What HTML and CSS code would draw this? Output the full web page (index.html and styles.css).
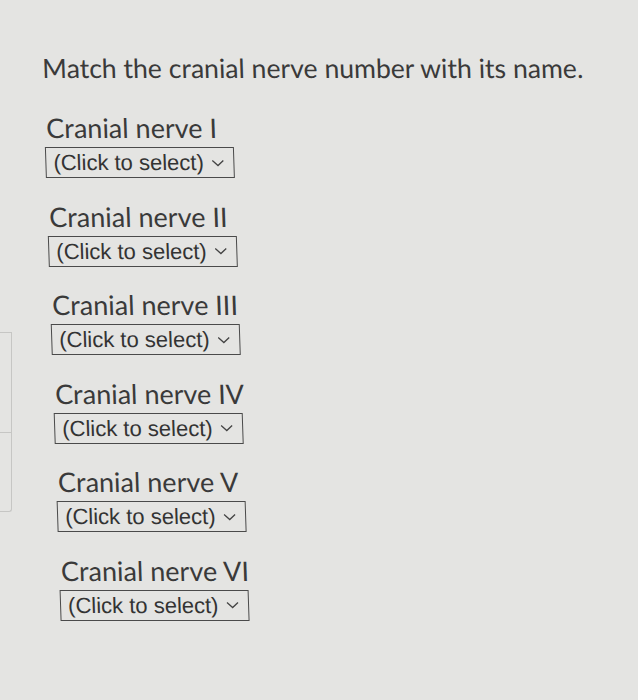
FILE: index.html
```html
<!DOCTYPE html>
<html lang="en">
<head>
    <meta charset="UTF-8">
    <meta name="viewport" content="width=device-width, initial-scale=1.0">
    <title>Cranial nerves</title>
    <link rel="stylesheet" href="styles.css">
</head>
<body>
    <!-- side toolbar, mostly hidden off the left edge -->
    <div class="side-tabs">
        <div class="side-tabs__item"></div>
        <div class="side-tabs__item"></div>
    </div>

    <div class="question">
        <p class="question__prompt">Match the cranial nerve number with its name.</p>

        <div class="match-list">
            <div class="match-row">
                <label class="match-row__label">Cranial nerve I</label>
                <div class="dropdown">
                    <span>(Click to select)</span>
                    <svg class="dropdown__chevron" width="13" height="8" viewBox="0 0 13 8"><polyline points="1,1.5 6.5,6.5 12,1.5"/></svg>
                </div>
            </div>
            <div class="match-row">
                <label class="match-row__label">Cranial nerve II</label>
                <div class="dropdown">
                    <span>(Click to select)</span>
                    <svg class="dropdown__chevron" width="13" height="8" viewBox="0 0 13 8"><polyline points="1,1.5 6.5,6.5 12,1.5"/></svg>
                </div>
            </div>
            <div class="match-row">
                <label class="match-row__label">Cranial nerve III</label>
                <div class="dropdown">
                    <span>(Click to select)</span>
                    <svg class="dropdown__chevron" width="13" height="8" viewBox="0 0 13 8"><polyline points="1,1.5 6.5,6.5 12,1.5"/></svg>
                </div>
            </div>
            <div class="match-row">
                <label class="match-row__label">Cranial nerve IV</label>
                <div class="dropdown">
                    <span>(Click to select)</span>
                    <svg class="dropdown__chevron" width="13" height="8" viewBox="0 0 13 8"><polyline points="1,1.5 6.5,6.5 12,1.5"/></svg>
                </div>
            </div>
            <div class="match-row">
                <label class="match-row__label">Cranial nerve V</label>
                <div class="dropdown">
                    <span>(Click to select)</span>
                    <svg class="dropdown__chevron" width="13" height="8" viewBox="0 0 13 8"><polyline points="1,1.5 6.5,6.5 12,1.5"/></svg>
                </div>
            </div>
            <div class="match-row">
                <label class="match-row__label">Cranial nerve VI</label>
                <div class="dropdown">
                    <span>(Click to select)</span>
                    <svg class="dropdown__chevron" width="13" height="8" viewBox="0 0 13 8"><polyline points="1,1.5 6.5,6.5 12,1.5"/></svg>
                </div>
            </div>
        </div>
    </div>
</body>
</html>
```

FILE: styles.css
```css
* {
    margin: 0;
    padding: 0;
    box-sizing: border-box;
}

body {
    background: #e4e4e2;
    color: #3a3a3a;
    font-family: Lato, 'Open Sans', sans-serif;
    min-height: 700px;
    position: relative;
}

.side-tabs {
    position: absolute;
    left: 0;
    top: 332px;
    width: 12px;
    display: flex;
    flex-direction: column;
}

.side-tabs__item {
    height: 101px;
    border: 1px solid #c6c6c4;
    border-left: none;
}

.side-tabs__item + .side-tabs__item {
    height: 79px;
    border-top: none;
    border-bottom-right-radius: 3px;
}

.question {
    padding: 51px 0 0 40px;
    transform: skewX(1.9deg);
    transform-origin: 0 0;
}

.question__prompt {
    font-size: 26.6px;
    line-height: 34px;
    white-space: nowrap;
}

.match-list {
    display: flex;
    flex-direction: column;
    gap: 21.5px;
    margin-top: 26px;
}

.match-row {
    display: flex;
    flex-direction: column;
    align-items: flex-start;
    gap: 2px;
}

.match-row__label {
    font-size: 27px;
    line-height: 34px;
    padding-left: 2px;
}

.dropdown {
    display: flex;
    align-items: center;
    gap: 8px;
    padding: 2px 9px 2px 7px;
    border: 1px solid #4a4a4a;
    font-family: 'Liberation Sans', Arial, sans-serif;
    font-size: 22px;
    line-height: 25px;
    color: #333;
}

.dropdown__chevron {
    fill: none;
    stroke: #444;
    stroke-width: 1.3;
}
```
